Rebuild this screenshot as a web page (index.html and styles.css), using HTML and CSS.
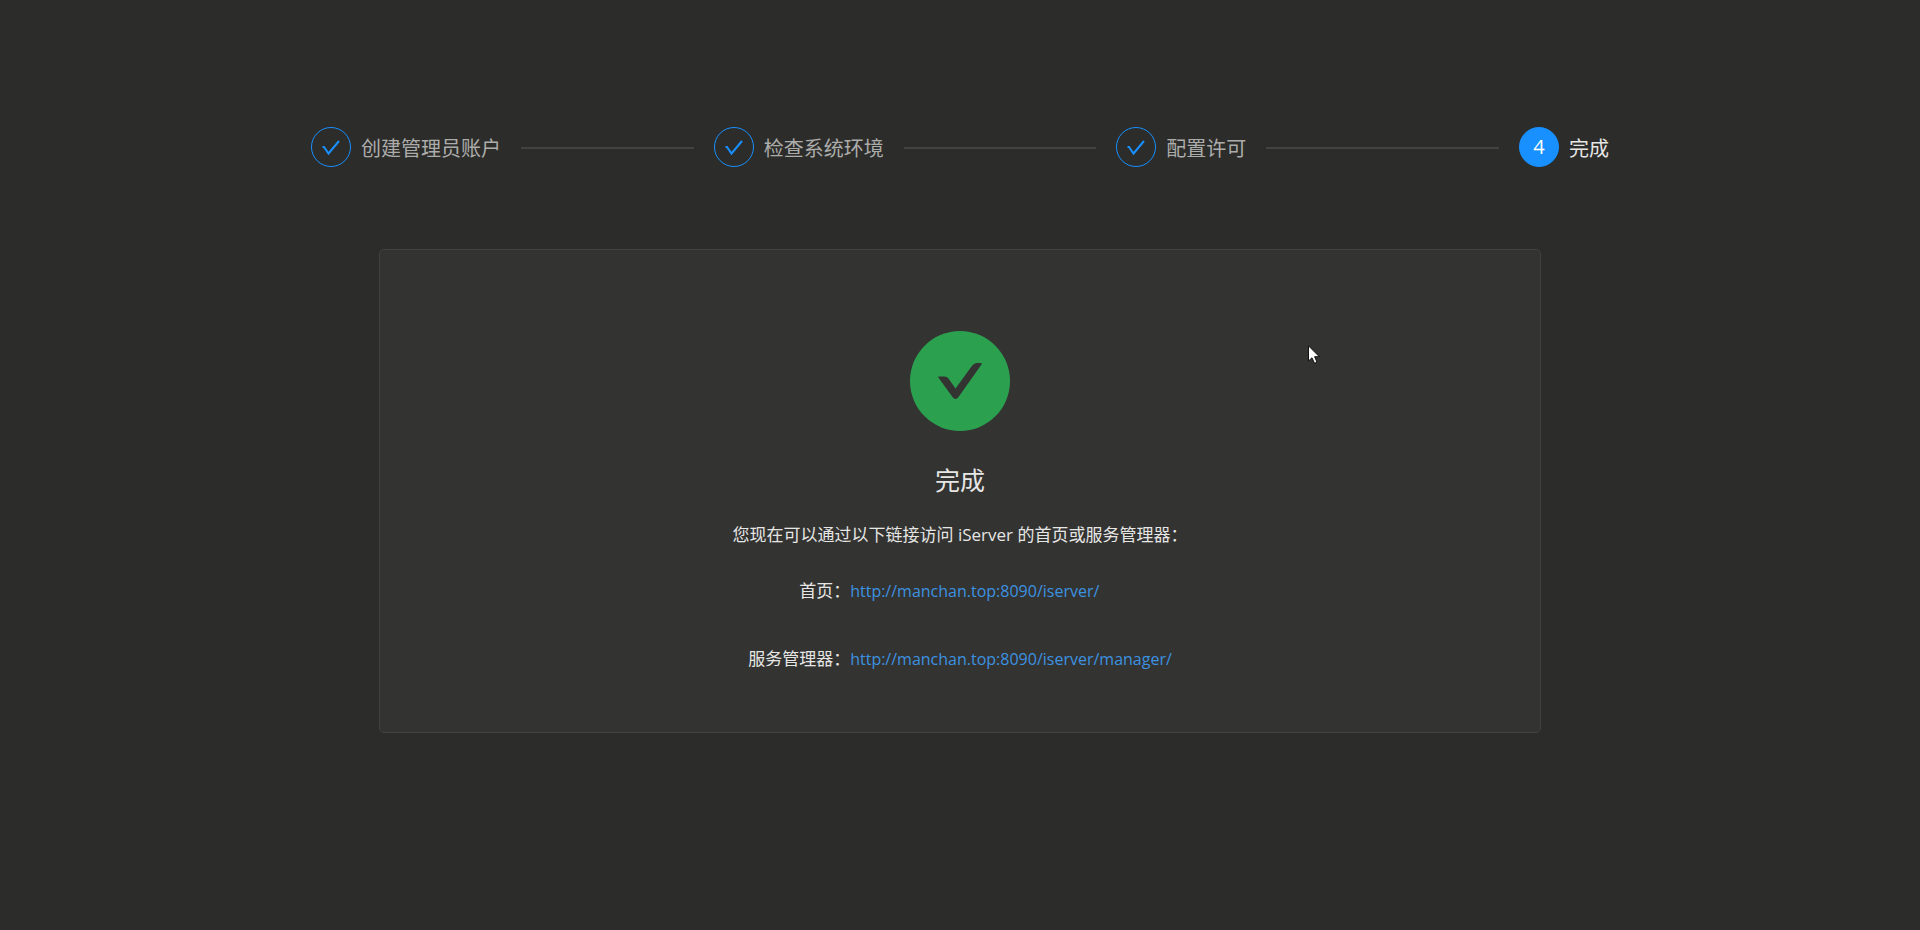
FILE: index.html
```html
<!DOCTYPE html>
<html lang="zh-CN">
<head>
    <meta charset="UTF-8">
    <meta name="viewport" content="width=device-width, initial-scale=1.0">
    <title>完成</title>
    <link rel="stylesheet" href="styles.css">
</head>
<body>
    <ol class="steps">
        <li class="step finished">
            <span class="step-icon">
                <svg viewBox="0 0 20 20" aria-hidden="true"><path d="M1.500 10H3L7.500 16.500L18 4"/></svg>
            </span>
            <span class="step-title">创建管理员账户</span>
        </li>
        <li class="step finished">
            <span class="step-icon">
                <svg viewBox="0 0 20 20" aria-hidden="true"><path d="M1.500 10H3L7.500 16.500L18 4"/></svg>
            </span>
            <span class="step-title">检查系统环境</span>
        </li>
        <li class="step finished">
            <span class="step-icon">
                <svg viewBox="0 0 20 20" aria-hidden="true"><path d="M1.500 10H3L7.500 16.500L18 4"/></svg>
            </span>
            <span class="step-title">配置许可</span>
        </li>
        <li class="step active" aria-current="step">
            <span class="step-icon">4</span>
            <span class="step-title">完成</span>
        </li>
    </ol>

    <main class="card">
        <svg class="success-icon" viewBox="0 0 100 100" aria-hidden="true">
            <circle cx="50" cy="50" r="50" fill="#2ba150"/>
            <path d="M29 45.500h5.500q2.500 0 4 2L45.500 57.500L61.500 35.500q2.500-3.500 5.500-3.500h4q1.500 0 .5 1.500L48.500 66q-3 4-6 0L28.500 46.700q-.8-1.200 .5-1.200z" fill="#333331"/>
        </svg>
        <h1>完成</h1>
        <p class="message">您现在可以通过以下链接访问 iServer 的首页或服务管理器：</p>
        <dl class="links">
            <dt>首页：</dt>
            <dd><a href="http://manchan.top:8090/iserver/">http://manchan.top:8090/iserver/</a></dd>
            <dt>服务管理器：</dt>
            <dd><a href="http://manchan.top:8090/iserver/manager/">http://manchan.top:8090/iserver/manager/</a></dd>
        </dl>
        <svg class="pointer" viewBox="0 0 12 19" aria-hidden="true">
            <path d="M.5 .8V16L4 12.800L6.500 18.300L9 17.200L6.600 11.700H11.300z" fill="#fff" stroke="#111"/>
        </svg>
    </main>
</body>
</html>
```
FILE: styles.css
```css
* {
    box-sizing: border-box;
}
body {
    margin: 0;
    padding: 127px 32px 40px;
    background-color: #2c2c2a;
    color: #e6e6e5;
    font-family: "Noto Sans CJK SC", sans-serif;
    font-size: 17px;
    line-height: 28px;
}
.steps {
    display: flex;
    max-width: 1298px;
    margin: 0 auto 82px;
    padding: 0;
    list-style: none;
}
.step {
    display: flex;
    flex: 1;
    align-items: center;
    gap: 10px;
    color: #acacab;
    font-size: 20px;
    white-space: nowrap;
}
.step.active {
    flex: none;
    color: #e6e6e5;
}
.step-title {
    padding-top: 2px;
}
/* line to the next step */
.step.finished::after {
    content: "";
    flex: 1;
    height: 2px;
    margin: 2px 20px 0 10px;
    background-color: #424240;
}
.step-icon {
    display: flex;
    justify-content: center;
    align-items: center;
    width: 40px;
    height: 40px;
    border: 1px solid #1890ff;
    border-radius: 50%;
}
.step-icon svg {
    width: 20px;
    height: 20px;
    fill: none;
    stroke: #1890ff;
    stroke-width: 2;
}
.step.active .step-icon {
    background-color: #1890ff;
    color: #fff;
    font-family: "Open Sans", sans-serif;
}
.card {
    position: relative;
    max-width: 1162px;
    margin: 0 auto;
    padding: 81px 20px 59px;
    background-color: #333331;
    border: 1px solid #424240;
    border-radius: 5px;
    text-align: center;
}
.success-icon {
    display: block;
    width: 100px;
    height: 100px;
    margin: 0 auto 28px;
}
h1 {
    margin: 0 0 22px;
    font-size: 25px;
    font-weight: normal;
    line-height: 40px;
}
.message,
.links {
    font-family: "Open Sans", "Noto Sans CJK SC", sans-serif;
}
.message {
    margin: 0 0 28px;
}
.links {
    display: grid;
    grid-template-columns: auto auto;
    justify-content: center;
    row-gap: 40px;
    margin: 0;
}
.links dt {
    text-align: right;
}
.links dd {
    margin: 0;
    font-size: 16px;
    text-align: left;
}
.links a {
    color: #3c92e0;
    text-decoration: none;
}
.pointer {
    position: absolute;
    top: 95px;
    left: 80%;
    width: 12px;
    height: 19px;
}
```
